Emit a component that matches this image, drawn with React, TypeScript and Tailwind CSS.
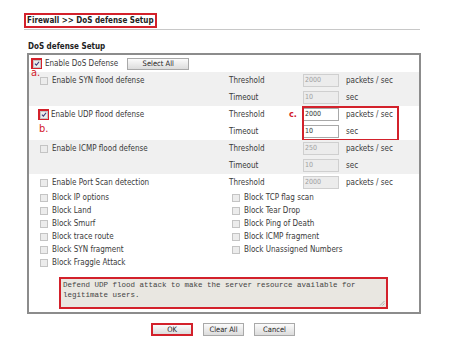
import type { ReactNode } from 'react';

const font = { fontFamily: '"DejaVu Sans Condensed", "DejaVu Sans", sans-serif' };

function Box({ checked = false }: { checked?: boolean }) {
  return (
    <span className="relative inline-flex h-[8px] w-[8px] shrink-0 items-center justify-center border border-[#c4c4c4] bg-[#ececec]">
      {checked && (
        <svg viewBox="0 0 8 8" className="h-[7px] w-[7px]">
          <path d="M1.2 4.2 L3.2 6.2 L6.8 1.6" fill="none" stroke="#3a3a7a" strokeWidth="1.4" />
        </svg>
      )}
    </span>
  );
}

function Field({ value, enabled = false }: { value: string; enabled?: boolean }) {
  return (
    <div
      className={`flex h-[13px] w-[36px] items-center pl-[1px] text-[7px] border ${
        enabled ? 'border-[#a8a8a8] bg-white text-[#333]' : 'border-[#cfcfcf] bg-[#ececec] text-[#a0a0a0]'
      }`}
    >
      {value}
    </div>
  );
}

function Param({ label, value, unit, enabled }: { label: string; value: string; unit: string; enabled?: boolean }) {
  return (
    <div className="flex h-[17px] items-center">
      <span className="w-[74px]">{label}</span>
      <Field value={value} enabled={enabled} />
      <span className="ml-[7px]">{unit}</span>
    </div>
  );
}

function Flood({ label, threshold, gray, check, extra }: { label: string; threshold: string; gray?: boolean; check?: ReactNode; extra?: ReactNode }) {
  const enabled = !!check;
  return (
    <div className={`relative flex ${gray ? 'bg-[#f0f0f0]' : ''}`}>
      <div className="flex h-[17px] w-[200px] items-center">
        {check ?? (
          <span className="ml-[11px] mr-[4px] flex">
            <Box />
          </span>
        )}
        <span>{label}</span>
      </div>
      <div>
        <Param label="Threshold" value={threshold} unit="packets / sec" enabled={enabled} />
        <Param label="Timeout" value="10" unit="sec" enabled={enabled} />
      </div>
      {extra}
    </div>
  );
}

function Item({ label }: { label: string }) {
  return (
    <div className="flex h-[13px] items-center">
      <span className="mr-[4px] flex">
        <Box />
      </span>
      {label}
    </div>
  );
}

function Btn({ label, red }: { label: string; red?: boolean }) {
  return (
    <button
      className={`flex h-[13px] items-center justify-center bg-gradient-to-b from-[#fbfbfb] to-[#dcdcdc] text-[7.5px] text-[#222] ${
        red ? 'w-[42px] border-2 border-[#d3212b]' : 'w-[41px] border border-[#a9a9a9]'
      }`}
      style={font}
    >
      {label}
    </button>
  );
}

export default function App() {
  const left = ['Block IP options', 'Block Land', 'Block Smurf', 'Block trace route', 'Block SYN fragment', 'Block Fraggle Attack'];
  const right = ['Block TCP flag scan', 'Block Tear Drop', 'Block Ping of Death', 'Block ICMP fragment', 'Block Unassigned Numbers'];

  return (
    <div className="h-[348px] w-[474px] overflow-hidden bg-white text-[8px] text-[#3a3a3a]" style={font}>
      <div className="ml-[24px] mt-[13px] w-[396px] border-b border-[#c8c8c8] pb-[1px]">
        <div className="inline-flex h-[15px] items-center border-2 border-[#d3212b] px-[1px] text-[8px] font-bold text-[#222]">
          Firewall &gt;&gt; DoS defense Setup
        </div>
      </div>

      <div className="ml-[28px] mt-[11px] h-[12px] text-[8px] font-bold text-[#222]">DoS defense Setup</div>

      <div className="ml-[27px] h-[261px] w-[394px] border-2 border-[#8c8c8c]">
        <div className="relative z-10 flex h-[17px] items-center">
          <span className="ml-[2px] flex h-[11px] w-[11px] items-center justify-center border-2 border-[#d3212b]">
            <Box checked />
          </span>
          <span className="ml-[3px]">Enable DoS Defense</span>
          <button className="ml-[9px] flex h-[12px] w-[62px] items-center justify-center border border-[#a9a9a9] bg-gradient-to-b from-[#fbfbfb] to-[#dcdcdc] text-[7.5px] text-[#222]" style={font}>
            Select All
          </button>
          <span className="absolute left-[2px] top-[12px] text-[11px] leading-none text-[#d3212b]">a.</span>
        </div>

        <Flood label="Enable SYN flood defense" threshold="2000" gray />
        <Flood
          label="Enable UDP flood defense"
          threshold="2000"
          check={
            <span className="ml-[9px] mr-[2px] flex h-[11px] w-[11px] items-center justify-center border-2 border-[#d3212b]">
              <Box checked />
            </span>
          }
          extra={
            <>
              <span className="absolute left-[10px] top-[17px] z-10 text-[11px] leading-none text-[#d3212b]">b.</span>
              <span className="absolute left-[260px] top-[4px] text-[9px] font-bold leading-none text-[#d3212b]">c.</span>
              <div className="absolute left-[273px] top-0 h-[35px] w-[97px] border-2 border-[#d3212b]" />
            </>
          }
        />
        <Flood label="Enable ICMP flood defense" threshold="250" gray />

        <div className="flex h-[17px] items-center">
          <span className="ml-[11px] mr-[4px] flex">
            <Box />
          </span>
          <span className="w-[177px]">Enable Port Scan detection</span>
          <span className="w-[74px]">Threshold</span>
          <Field value="2000" />
          <span className="ml-[7px]">packets / sec</span>
        </div>

        <div className="flex">
          <div className="ml-[11px] w-[192px]">
            {left.map((l) => (
              <Item key={l} label={l} />
            ))}
          </div>
          <div>
            {right.map((l) => (
              <Item key={l} label={l} />
            ))}
          </div>
        </div>

        <div className="ml-[30px] mt-[8px] h-[32px] w-[329px] border-2 border-[#d3212b]">
          <div
            className="relative h-full w-full bg-[#e9e7e1] px-[2px] pt-[1px] text-[7.5px] leading-[10px] text-[#444]"
            style={{ fontFamily: '"Liberation Mono", monospace' }}
          >
            Defend UDP flood attack to make the server resource available for
            <br />
            legitimate users.
            <svg viewBox="0 0 6 6" className="absolute bottom-[1px] right-[1px] h-[6px] w-[6px]">
              <path d="M5.5 1 L1 5.5 M5.5 3.5 L3.5 5.5" stroke="#999" strokeWidth="0.7" />
            </svg>
          </div>
        </div>
      </div>

      <div className="ml-[151px] mt-[9px] flex gap-[10px]">
        <Btn label="OK" red />
        <Btn label="Clear All" />
        <Btn label="Cancel" />
      </div>
    </div>
  );
}
